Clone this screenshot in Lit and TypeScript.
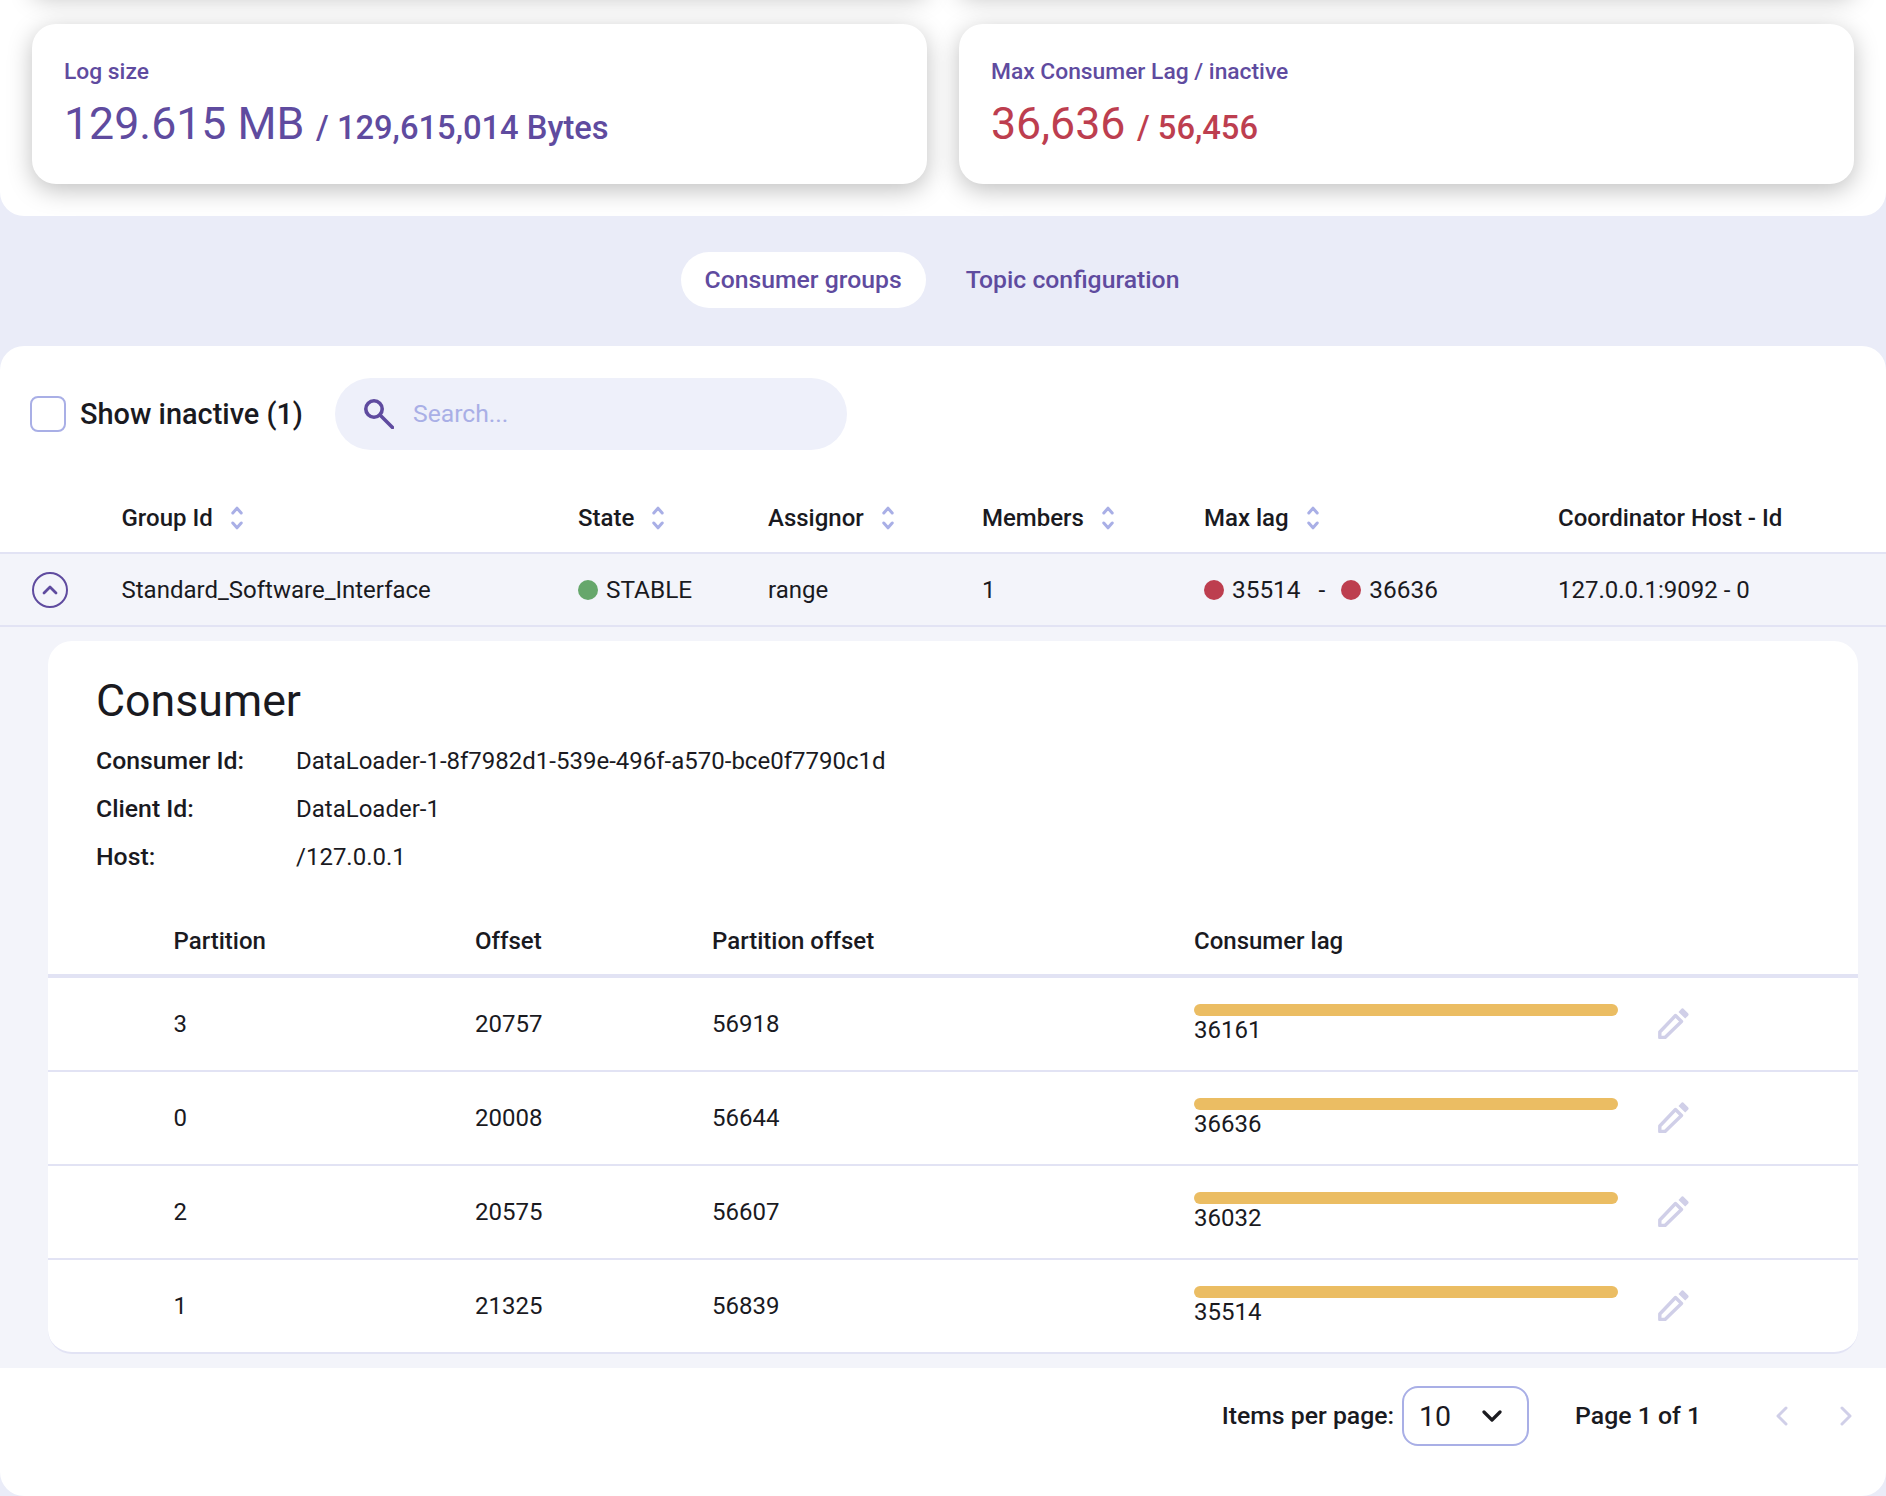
import { LitElement, html, css, svg } from "lit";
import { customElement } from "lit/decorators.js";

const parts = [
  { p: 3, o: 20757, po: 56918, lag: 36161 },
  { p: 0, o: 20008, po: 56644, lag: 36636 },
  { p: 2, o: 20575, po: 56607, lag: 36032 },
  { p: 1, o: 21325, po: 56839, lag: 35514 },
];

const sortIcon = html`<svg class="sort" viewBox="0 0 12 24" width="12" height="24" fill="none" stroke="#a9afe6" stroke-width="3" stroke-linecap="round" stroke-linejoin="round">
  <path d="M1.8 7 6 2.2l4.2 4.8" /><path d="M1.8 17 6 21.8l4.2-4.8" />
</svg>`;

const pencil = svg`<svg class="pencil" viewBox="0 0 31 31" width="31" height="31">
  <path d="M17.5 7.5 23.5 13.5 7 29.5H1.8V24Z" fill="none" stroke="#d0cfe8" stroke-width="3.4" stroke-linejoin="round" />
  <path d="M20.5 4 23 1.2a2 2 0 0 1 3 0l3.8 3.8a2 2 0 0 1 0 3L27.2 10.6Z" fill="#d0cfe8" />
</svg>`;

@customElement("app-root")
export class AppRoot extends LitElement {
  static styles = css`
    :host {
      display: block;
      height: 1496px;
      overflow: hidden;
      background: #eaecf8;
      font-family: Roboto, "Liberation Sans", sans-serif;
      font-size: 24px;
      color: #1a1a1f;
    }
    .top {
      background: #fff;
      border-radius: 0 0 24px 24px;
      padding: 0 32px 32px;
      overflow: hidden;
    }
    .ghost, .cards {
      display: grid;
      grid-template-columns: 1fr 1fr;
      gap: 32px;
    }
    .ghost { height: 24px; }
    .ghost div {
      height: 24px;
      margin-top: -32px;
      border-radius: 24px;
      box-shadow: 0 6px 24px rgba(0, 0, 0, 0.25);
    }
    .card {
      height: 160px;
      box-sizing: border-box;
      padding: 36px 32px 0;
      background: #fff;
      border-radius: 24px;
      box-shadow: 0 6px 24px rgba(0, 0, 0, 0.25);
      color: #5f4b9f;
    }
    .card .label { font-size: 22.8px; font-weight: 500; line-height: 24px; }
    .card .value { font-size: 44.7px; line-height: 56px; margin-top: 12px; white-space: nowrap; }
    .card .sub { font-size: 32.7px; font-weight: 500; margin-left: 0.5px; }
    .card .value.danger { color: #bd3e4f; }

    .tabs {
      display: flex;
      justify-content: center;
      gap: 16px;
      padding: 36px 2px 38px 0;
    }
    .tab {
      height: 56px;
      box-sizing: border-box;
      padding: 0 24px 2px;
      display: flex;
      align-items: center;
      border-radius: 28px;
      font-size: 24.75px;
      font-weight: 500;
      color: #5f4b9f;
    }
    .tab.active { background: #fff; }

    .main {
      background: #fff;
      border-radius: 24px;
      height: 1150px;
      display: flex;
      flex-direction: column;
    }
    .toolbar {
      display: flex;
      align-items: center;
      padding: 32px 0 0 30px;
    }
    .check {
      display: flex;
      align-items: center;
      gap: 14px;
      font-size: 28.9px;
      font-weight: 500;
      margin-right: 32px;
    }
    .box {
      width: 36px;
      height: 36px;
      box-sizing: border-box;
      border: 2px solid #a9afe6;
      border-radius: 8px;
    }
    .search {
      width: 512px;
      height: 72px;
      box-sizing: border-box;
      padding-left: 29px;
      display: flex;
      align-items: center;
      gap: 19px;
      background: #eef0fa;
      border-radius: 36px;
    }
    .search input {
      flex: 1;
      min-width: 0;
      border: 0;
      outline: 0;
      background: transparent;
      font: inherit;
      font-size: 24.7px;
      color: #a9afe6;
      padding: 0 0 2px;
    }
    .search input::placeholder { color: #a9afe6; opacity: 1; }

    .grow { display: grid; grid-template-columns: 121.5px 456.5px 190px 214px 222px 354px 1fr; align-items: center; }
    .thead { height: 104px; box-sizing: border-box; padding-top: 34px; font-weight: 500; border-bottom: 2px solid #e2e3f4; }
    .th { display: flex; align-items: center; gap: 18px; white-space: nowrap; }
    .sort { display: block; }
    .row { height: 73px; box-sizing: border-box; background: #f3f4fa; border-bottom: 2px solid #e2e3f4; }
    .expand {
      width: 36px;
      height: 36px;
      margin-left: 32px;
      box-sizing: border-box;
      border: 2px solid #5f4b9f;
      border-radius: 50%;
      display: flex;
      align-items: center;
      justify-content: center;
    }
    .status { display: flex; align-items: center; white-space: nowrap; font-size: 24.4px; }
    .dot { width: 20px; height: 20px; border-radius: 50%; margin-right: 8px; flex: none; }
    .green { background: #66a76b; }
    .red { background: #bd3e4f; }
    .dash { margin: 0 16px 0 18px; }

    .detail {
      background: #f3f4fa;
      padding: 14px 28px 14px 48px;
    }
    .inner {
      background: #fff;
      border-radius: 24px;
      height: 713px;
      box-sizing: border-box;
      border-bottom: 2px solid #e2e3f4;
      overflow: hidden;
    }
    h2 {
      margin: 0;
      padding: 32px 48px 0;
      font-size: 44.7px;
      font-weight: 400;
      line-height: 56px;
    }
    .info {
      display: grid;
      grid-template-columns: 200px 1fr;
      grid-auto-rows: 48px;
      align-items: center;
      padding: 7px 48px 0;
      margin: 0;
    }
    .info dt { font-weight: 500; font-size: 24.8px; }
    .info dd { margin: 0; padding-top: 1px; }

    .srow { display: grid; grid-template-columns: 301.5px 237px 482px 464px 1fr; padding-left: 125.5px; align-items: center; }
    .shead { height: 98px; box-sizing: border-box; padding-top: 28px; border-bottom: 4px solid #e2e3f4; font-weight: 500; font-size: 24px; }
    .sbody { height: 94px; box-sizing: border-box; border-bottom: 2px solid #e2e3f4; }
    .sbody:last-child { border-bottom: 0; padding-bottom: 2px; }
    .lag { display: flex; flex-direction: column; width: 424px; }
    .bar { height: 12px; border-radius: 6px; background: #ebbd63; }
    .lag span { line-height: 28px; }
    .pencil { display: block; margin-top: -2px; }

    .pager {
      flex: 1;
      display: flex;
      justify-content: flex-end;
      align-items: flex-start;
      padding: 18px 0 0;
      font-weight: 500;
      font-size: 24.8px;
    }
    .pager .txt { line-height: 60px; white-space: nowrap; }
    .select {
      width: 127px;
      height: 60px;
      box-sizing: border-box;
      margin: 0 46px 0 8px;
      border: 2px solid #a9afe6;
      border-radius: 16px;
      padding: 0 25px 0 15px;
      display: flex;
      align-items: center;
      justify-content: space-between;
      font-size: 28.5px;
      font-weight: 400;
    }
    .nav { display: flex; align-items: center; height: 60px; margin-left: 75px; margin-right: 34px; gap: 52px; }
    .nav svg { display: block; }
  `;

  render() {
    return html`
      <section class="top">
        <div class="ghost"><div></div><div></div></div>
        <div class="cards">
          <div class="card">
            <div class="label">Log size</div>
            <div class="value">129.615 MB <span class="sub">/ 129,615,014 Bytes</span></div>
          </div>
          <div class="card">
            <div class="label">Max Consumer Lag / inactive</div>
            <div class="value danger">36,636 <span class="sub">/ 56,456</span></div>
          </div>
        </div>
      </section>

      <nav class="tabs">
        <div class="tab active">Consumer groups</div>
        <div class="tab">Topic configuration</div>
      </nav>

      <section class="main">
        <div class="toolbar">
          <label class="check"><span class="box"></span>Show inactive (1)</label>
          <div class="search">
            <svg viewBox="0 0 30 30" width="30" height="30" fill="none" stroke="#5f4b9f" stroke-width="3.6" stroke-linecap="round">
              <circle cx="10" cy="10" r="8.2" /><path d="M16 16 28.5 28.5" />
            </svg>
            <input placeholder="Search..." />
          </div>
        </div>

        <div class="grow thead">
          <div></div>
          <div class="th">Group Id ${sortIcon}</div>
          <div class="th">State ${sortIcon}</div>
          <div class="th">Assignor ${sortIcon}</div>
          <div class="th">Members ${sortIcon}</div>
          <div class="th">Max lag ${sortIcon}</div>
          <div class="th">Coordinator Host - Id</div>
        </div>
        <div class="grow row">
          <div>
            <div class="expand">
              <svg viewBox="0 0 16 10" width="16" height="10" fill="none" stroke="#5f4b9f" stroke-width="2.8" stroke-linecap="round" stroke-linejoin="round"><path d="M2 8 8 2l6 6" /></svg>
            </div>
          </div>
          <div>Standard_Software_Interface</div>
          <div class="status"><span class="dot green"></span>STABLE</div>
          <div>range</div>
          <div>1</div>
          <div class="status"><span class="dot red"></span>35514<span class="dash">-</span><span class="dot red"></span>36636</div>
          <div>127.0.0.1:9092 - 0</div>
        </div>

        <div class="detail">
          <div class="inner">
            <h2>Consumer</h2>
            <dl class="info">
              <dt>Consumer Id:</dt><dd>DataLoader-1-8f7982d1-539e-496f-a570-bce0f7790c1d</dd>
              <dt>Client Id:</dt><dd>DataLoader-1</dd>
              <dt>Host:</dt><dd>/127.0.0.1</dd>
            </dl>
            <div class="srow shead">
              <div>Partition</div><div>Offset</div><div>Partition offset</div><div>Consumer lag</div><div></div>
            </div>
            ${parts.map(
              (r) => html`<div class="srow sbody">
                <div>${r.p}</div><div>${r.o}</div><div>${r.po}</div>
                <div class="lag"><div class="bar"></div><span>${r.lag}</span></div>
                <div>${pencil}</div>
              </div>`
            )}
          </div>
        </div>

        <div class="pager">
          <span class="txt">Items per page:</span>
          <div class="select">10
            <svg viewBox="0 0 20 12" width="20" height="12" fill="none" stroke="#1a1a1f" stroke-width="3.2" stroke-linecap="round" stroke-linejoin="round"><path d="M2 2l8 8 8-8" /></svg>
          </div>
          <span class="txt">Page 1 of 1</span>
          <div class="nav">
            <svg viewBox="0 0 12 20" width="12" height="20" fill="none" stroke="#d0cfe8" stroke-width="3" stroke-linecap="round" stroke-linejoin="round"><path d="M10 2 2 10l8 8" /></svg>
            <svg viewBox="0 0 12 20" width="12" height="20" fill="none" stroke="#d0cfe8" stroke-width="3" stroke-linecap="round" stroke-linejoin="round"><path d="M2 2l8 8-8 8" /></svg>
          </div>
        </div>
      </section>
    `;
  }
}
